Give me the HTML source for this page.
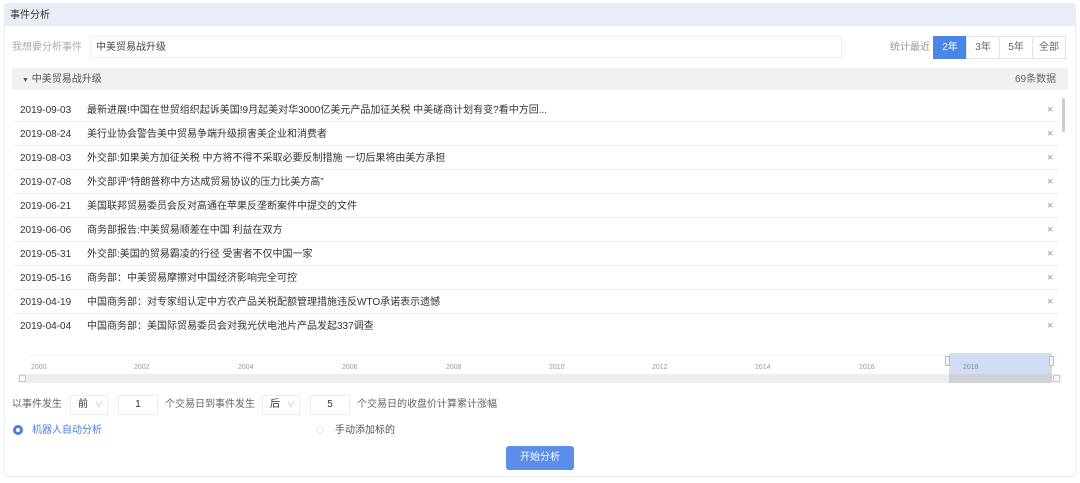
<!DOCTYPE html>
<html><head><meta charset="utf-8"><style>
*{margin:0;padding:0;box-sizing:border-box}
body{width:1080px;height:483px;background:#fff;font-family:"Liberation Sans","Noto Sans CJK SC",sans-serif;font-size:10px;line-height:12px;color:#333;position:relative;overflow:hidden}
.a{position:absolute;white-space:nowrap}
.panel{position:absolute;left:4px;top:3px;width:1072px;height:474px;border:1px solid #eceef2;border-radius:3px}
.hdr{position:absolute;left:5px;top:4px;width:1070px;height:22px;background:#e9eef6}
.row{position:absolute;left:12px;width:1046px;height:24px;border-bottom:1px solid #f0f0f0}
.row .d{position:absolute;left:8px;top:7px;color:#333;line-height:12px}
.row .t{position:absolute;left:75px;top:7px;color:#333;line-height:12px}
.row .x{position:absolute;left:1035px;top:6px;color:#999;font-size:11px;line-height:12px}
.btn{position:absolute;top:36px;height:23px;width:34px;border:1px solid #e3e3e3;text-align:center;line-height:21px;color:#666}
.yr{position:absolute;top:364px;font-size:7px;line-height:8px;color:#999}
.box{position:absolute;border:1px solid #eee;height:20px;top:395px;line-height:18px;text-align:center}
</style></head><body>
<div class="panel"></div>
<div class="hdr"></div>
<div class="a" style="left:10px;top:10px;color:#333">事件分析</div>
<div class="a" style="left:12px;top:42px;color:#aaa">我想要分析事件</div>
<div class="a" style="left:90px;top:36px;width:752px;height:22px;border:1px solid #f0f0f0"></div>
<div class="a" style="left:96px;top:42px;color:#444">中美贸易战升级</div>
<div class="a" style="left:890px;top:42px;color:#999">统计最近</div>
<div class="btn" style="left:933px;background:#4a86e8;border-color:#4a86e8;color:#fff">2年</div>
<div class="btn" style="left:966px">3年</div>
<div class="btn" style="left:999px">5年</div>
<div class="btn" style="left:1032px">全部</div>
<div class="a" style="left:12px;top:68px;width:1056px;height:22px;background:#f1f1f1;border-radius:2px"></div>
<div class="a" style="left:22px;top:74px;color:#555"><span style="font-size:7px">▼</span> 中美贸易战升级</div>
<div class="a" style="left:1015px;top:74px;color:#666">69条数据</div>
<div class="a" style="left:1062px;top:98px;width:3px;height:34px;background:#ccc;border-radius:2px"></div>
<div class="row" style="top:98px"><span class="d">2019-09-03</span><span class="t">最新进展!中国在世贸组织起诉美国!9月起美对华3000亿美元产品加征关税 中美磋商计划有变?看中方回...</span><span class="x">×</span></div>
<div class="row" style="top:122px"><span class="d">2019-08-24</span><span class="t">美行业协会警告美中贸易争端升级损害美企业和消费者</span><span class="x">×</span></div>
<div class="row" style="top:146px"><span class="d">2019-08-03</span><span class="t">外交部:如果美方加征关税 中方将不得不采取必要反制措施 一切后果将由美方承担</span><span class="x">×</span></div>
<div class="row" style="top:170px"><span class="d">2019-07-08</span><span class="t">外交部评“特朗普称中方达成贸易协议的压力比美方高”</span><span class="x">×</span></div>
<div class="row" style="top:194px"><span class="d">2019-06-21</span><span class="t">美国联邦贸易委员会反对高通在苹果反垄断案件中提交的文件</span><span class="x">×</span></div>
<div class="row" style="top:218px"><span class="d">2019-06-06</span><span class="t">商务部报告:中美贸易顺差在中国 利益在双方</span><span class="x">×</span></div>
<div class="row" style="top:242px"><span class="d">2019-05-31</span><span class="t">外交部:美国的贸易霸凌的行径 受害者不仅中国一家</span><span class="x">×</span></div>
<div class="row" style="top:266px"><span class="d">2019-05-16</span><span class="t">商务部：中美贸易摩擦对中国经济影响完全可控</span><span class="x">×</span></div>
<div class="row" style="top:290px"><span class="d">2019-04-19</span><span class="t">中国商务部：对专家组认定中方农产品关税配额管理措施违反WTO承诺表示遗憾</span><span class="x">×</span></div>
<div class="row" style="top:314px;border:none"><span class="d">2019-04-04</span><span class="t">中国商务部：美国际贸易委员会对我光伏电池片产品发起337调查</span><span class="x">×</span></div>
<div class="a" style="left:28px;top:355px;width:1030px;height:18px;border-top:1px solid #f4f4f4"></div>
<div class="yr" style="left:31px">2000</div><div class="yr" style="left:134px">2002</div><div class="yr" style="left:238px">2004</div><div class="yr" style="left:342px">2006</div><div class="yr" style="left:446px">2008</div><div class="yr" style="left:549px">2010</div><div class="yr" style="left:652px">2012</div><div class="yr" style="left:755px">2014</div><div class="yr" style="left:859px">2016</div>
<div class="a" style="left:18px;top:374px;width:1043px;height:9px;background:#eeeeee"></div>
<div class="a" style="left:19px;top:375px;width:7px;height:7px;border:1px solid #ccc;background:#fafafa"></div>
<div class="a" style="left:1053px;top:375px;width:7px;height:7px;border:1px solid #ccc;background:#fafafa"></div>
<div class="a" style="left:949px;top:353px;width:103px;height:21px;background:#d2dcf2"></div>
<div class="a" style="left:949px;top:374px;width:103px;height:9px;background:#cfd2d8"></div>
<div class="yr" style="left:963px;color:#889">2018</div>
<div class="a" style="left:945px;top:356px;width:5px;height:10px;border:1px solid #bbb;background:#f4f4f4"></div>
<div class="a" style="left:1049px;top:356px;width:5px;height:10px;border:1px solid #bbb;background:#f4f4f4"></div>
<div class="a" style="left:12px;top:399px;color:#666">以事件发生</div>
<div class="box" style="left:70px;width:38px;text-align:left;padding-left:7px">前 <span style="color:#bbb;font-size:8px;margin-left:4px">∨</span></div>
<div class="box" style="left:118px;width:40px">1</div>
<div class="a" style="left:165px;top:399px;color:#666">个交易日到事件发生</div>
<div class="box" style="left:262px;width:38px;text-align:left;padding-left:7px">后 <span style="color:#bbb;font-size:8px;margin-left:4px">∨</span></div>
<div class="box" style="left:310px;width:40px">5</div>
<div class="a" style="left:357px;top:399px;color:#666">个交易日的收盘价计算累计涨幅</div>
<div class="a" style="left:13px;top:425px;width:10px;height:10px;border-radius:50%;background:#4a7fe0"></div>
<div class="a" style="left:16px;top:428px;width:4px;height:4px;border-radius:50%;background:#fff"></div>
<div class="a" style="left:32px;top:425px;color:#4a7fe0">机器人自动分析</div>
<div class="a" style="left:316px;top:426px;width:8px;height:8px;border:1px solid #e5e5e5;border-radius:50%"></div>
<div class="a" style="left:335px;top:425px;color:#555">手动添加标的</div>
<div class="a" style="left:506px;top:446px;width:68px;height:24px;background:#5b8ee8;border-radius:3px;color:#fff;text-align:center;line-height:24px">开始分析</div>
</body></html>
